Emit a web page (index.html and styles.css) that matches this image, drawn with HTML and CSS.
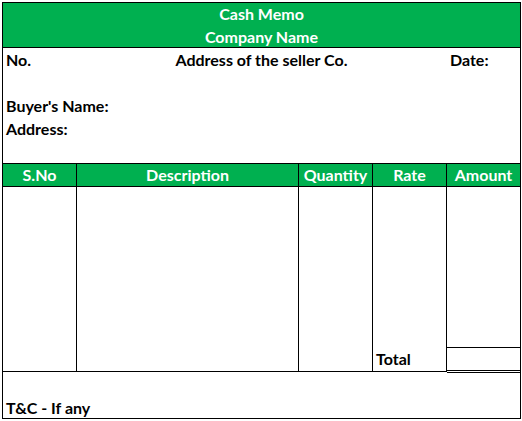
FILE: index.html
```html
<!DOCTYPE html>
<html>
<head>
<meta charset="utf-8">
<link rel="stylesheet" href="styles.css">
</head>
<body>
<div class="memo">
  <div class="title-band">
    <div class="title-line first">Cash Memo</div>
    <div class="title-line second">Company Name</div>
  </div>
  <div class="info">
    <div class="info-row top">
      <span class="left">No.</span>
      <span class="center">Address of the seller Co.</span>
      <span class="right"><span class="date">Date:</span></span>
    </div>
    <div class="info-row"></div>
    <div class="info-row">Buyer's Name:</div>
    <div class="info-row">Address:</div>
    <div class="info-row"></div>
  </div>
  <div class="thead">
    <div class="th">S.No</div>
    <div class="th">Description</div>
    <div class="th">Quantity</div>
    <div class="th">Rate</div>
    <div class="th last">Amount</div>
  </div>
  <div class="tbody">
    <div class="td"></div>
    <div class="td"></div>
    <div class="td"></div>
    <div class="td rate"><span class="total">Total</span></div>
    <div class="td amount">
      <div class="amount-body"></div>
      <div class="amount-total"></div>
    </div>
  </div>
  <div class="terms">T&amp;C - If any</div>
</div>
</body>
</html>
```

FILE: styles.css
```css
html, body {
  margin: 0;
  padding: 0;
  background: #fff;
}

body {
  font-family: Lato, "Liberation Sans", sans-serif;
  font-weight: 700;
  font-size: 16px;
  color: #000;
}

.memo {
  margin: 2px 0 0 2px;
  width: 519px;
  height: 417px;
  box-sizing: border-box;
  border: 1px solid #000;
  display: flex;
  flex-direction: column;
}

.title-band {
  background: #00b050;
  color: #fff;
  height: 44px;
  border-bottom: 1px solid #000;
  text-align: center;
}

.title-line.first {
  line-height: 22px;
}

.title-line.second {
  line-height: 22px;
  padding-top: 1px;
}

.info {
  height: 115px;
}

.info-row {
  height: 23px;
  line-height: 23px;
  padding-left: 3px;
}

.info-row.top {
  display: grid;
  grid-template-columns: 1fr auto 1fr;
  padding-left: 0;
}

.info-row .left {
  padding-left: 3px;
}

.info-row .right {
  display: flex;
  justify-content: flex-end;
}

.info-row .date {
  width: 70px;
}

.thead {
  display: grid;
  grid-template-columns: 74px 222px 74px 74px 73px;
  background: #00b050;
  color: #fff;
  border-top: 1px solid #000;
  border-bottom: 1px solid #000;
  height: 22px;
}

.th {
  text-align: center;
  line-height: 22px;
  border-right: 1px solid #000;
}

.th.last {
  border-right: none;
}

.tbody {
  display: grid;
  grid-template-columns: 74px 222px 74px 74px 73px;
  height: 186px;
  align-items: start;
}

.td {
  height: 185px;
  box-sizing: border-box;
  border-right: 1px solid #000;
  border-bottom: 1px solid #000;
}

.td.rate {
  display: flex;
  align-items: flex-end;
  padding: 0 0 1px 3px;
}

.total {
  line-height: 22px;
}

.td.amount {
  height: 186px;
  border: none;
  display: flex;
  flex-direction: column;
}

.amount-body {
  height: 160px;
  border-bottom: 1px solid #000;
}

.amount-total {
  height: 22px;
  border-bottom: 3px double #000;
}

.terms {
  flex: 1;
  display: flex;
  align-items: flex-end;
  padding-left: 3px;
  line-height: 20px;
}
```
